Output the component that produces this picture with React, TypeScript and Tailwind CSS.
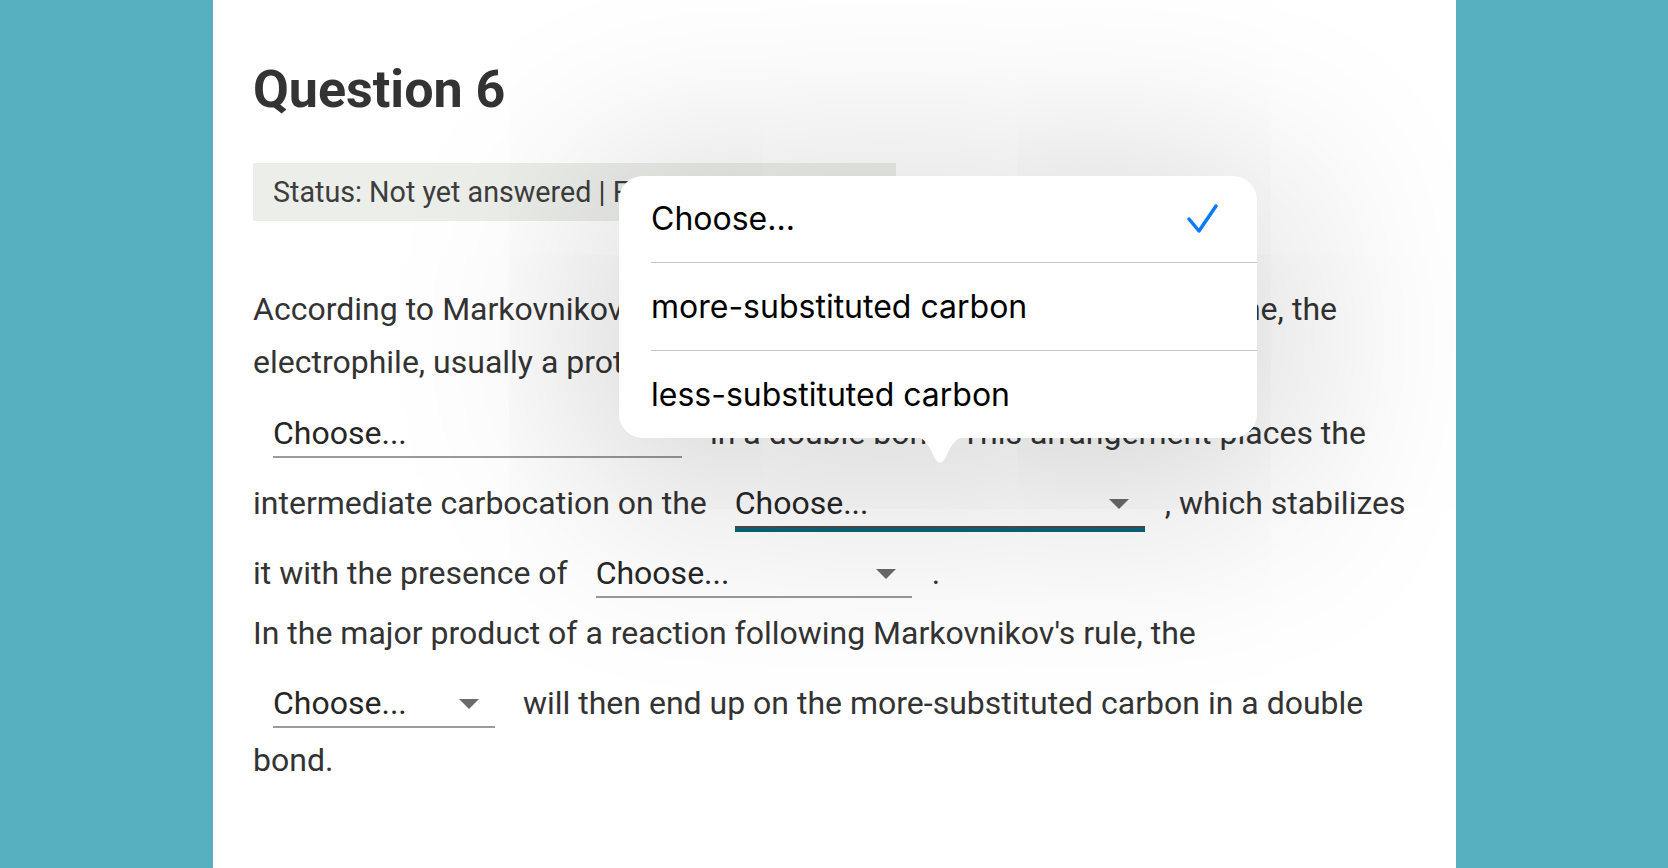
import React from 'react';

interface ChoiceProps {
  width: string;
  focused?: boolean;
  arrow?: boolean;
}

// Moodle-style inline select, drawn as a span so the caret can be styled
const Choice: React.FC<ChoiceProps> = ({ width, focused = false, arrow = true }) => (
  <span
    className={`relative mx-[20px] inline-block pb-[3px] align-baseline text-[#262626] ${width} ${
      focused
        ? 'border-b-2 border-[#4a4a4a] shadow-[0_4px_0_#0a6478]'
        : 'border-b-2 border-[#9a9a9a]'
    }`}
  >
    Choose...
    {arrow && (
      <svg className="absolute right-[16px] top-[16px]" width="20" height="10" viewBox="0 0 20 10">
        <polygon points="0,0 20,0 10,10" fill="#6b6b6b" />
      </svg>
    )}
  </span>
);

const options = ['Choose...', 'more-substituted carbon', 'less-substituted carbon'];

export default function App() {
  return (
    <div className="flex h-[868px] w-[1668px] overflow-hidden bg-[#56afbe] font-['Roboto',sans-serif]">
      <div className="w-[213px] shrink-0" />

      <main className="relative w-[1243px] shrink-0 overflow-hidden bg-white pl-[40px]">
        <h2 className="mt-[60px] h-[60px] text-[52px] font-bold leading-[60px] text-[#333333]">Question 6</h2>

        <div className="mt-[43px] h-[58px] w-[643px] overflow-hidden whitespace-nowrap bg-[#eceeea] pl-[20px] text-[28.7px] leading-[58px] text-[#3d3d3d]">
          Status: Not yet answered | Flag question
        </div>

        {/* Question text */}
        <div className="mt-[68px] whitespace-nowrap text-[32px] leading-[40px] text-[#333333]">
          <div className="h-[53px] w-[1084px] text-justify [text-align-last:justify]">
            According to Markovnikov's rule, when a protic acid HI adds to an alkene, the
          </div>
          <div className="h-[71px]">electrophile, usually a proton, attaches to the</div>
          <div className="h-[70px]">
            <Choice width="w-[409px]" arrow={false} /> in a double bond. This arrangement places the
          </div>
          <div className="h-[70px]">
            intermediate carbocation on the{' '}
            <Choice width="w-[410px]" focused />, which stabilizes
          </div>
          <div className="h-[60px]">
            it with the presence of{' '}
            <Choice width="w-[316px]" />.
          </div>
          <div className="h-[70px]">In the major product of a reaction following Markovnikov's rule, the</div>
          <div className="h-[57px]">
            <Choice width="w-[222px]" /> will then end up on the more-substituted carbon in a double
          </div>
          <div className="h-[40px]">bond.</div>
        </div>

        {/* Native picker popover */}
        <div className="absolute left-[406px] top-[176px] w-[638px] rounded-[24px] bg-white font-['Inter',sans-serif] text-[32px] text-black shadow-[0_30px_200px_40px_rgba(0,0,0,0.16)]">
          {options.map((opt, i) => (
            <div
              key={opt}
              className={`ml-[32px] flex items-center justify-between pr-[38px] ${
                i === 0 ? 'h-[86px]' : 'h-[88px] border-t border-[#c8c8c8]'
              }`}
            >
              <span>{opt}</span>
              {i === 0 && (
                <svg width="32" height="32" viewBox="0 0 32 32" fill="none">
                  <path d="M2 16 L12 28 L29 3" stroke="#0a7aff" strokeWidth="3.5" strokeLinecap="round" strokeLinejoin="round" />
                </svg>
              )}
            </div>
          ))}
        </div>
        <svg className="absolute left-[703px] top-[437px]" width="48" height="29" viewBox="0 0 48 29">
          <path d="M0 0 Q10 0 18 20 Q24 31 30 20 Q38 0 48 0 Z" fill="#ffffff" />
        </svg>
      </main>

      <div className="flex-1" />
    </div>
  );
}
